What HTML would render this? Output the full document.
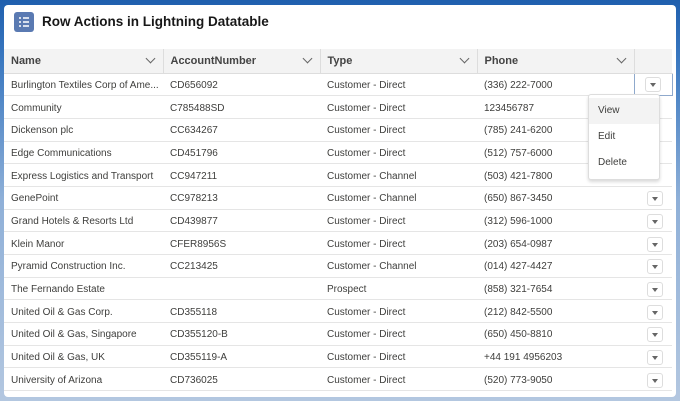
<!DOCTYPE html>
<html><head><meta charset="utf-8"><style>
*{box-sizing:border-box;margin:0;padding:0}
body{width:680px;height:401px;overflow:hidden;background:linear-gradient(#1f5fae 0px,#3a78c0 60px,#8fb0d8 200px,#b3c7e0 401px);font-family:"Liberation Sans",sans-serif;position:relative}
.card{position:absolute;left:4px;top:5px;width:672px;height:392px;background:#fff;border-radius:4px;overflow:hidden}
.icon{position:absolute;left:10px;top:7px;width:20px;height:20px;background:#5a7ab2;border-radius:3px}
.title{position:absolute;left:38px;top:9px;font-size:13.5px;font-weight:bold;color:#181818}
table{position:absolute;left:0;top:44px;border-collapse:collapse;table-layout:fixed;width:668px}
th{height:24px;background:#f3f3f3;text-align:left;font-size:11px;color:#444;font-weight:bold;padding-left:7px;border-right:1px solid #ddd;border-bottom:1px solid #ddd;position:relative}
th .c{position:absolute;right:9px;top:6px;width:7px;height:7px;border-right:1.2px solid #666;border-bottom:1.2px solid #666;transform:rotate(45deg)}
td{height:22.7px;font-size:10px;color:#3e3e3c;padding-left:7px;padding-top:2px;border-bottom:1px solid #e5e5e5;white-space:nowrap;overflow:hidden}
.b{display:inline-block;width:16px;height:15px;border:1px solid #ddd;border-radius:3px;position:relative;margin-left:6px;vertical-align:middle}
.b:after{content:"";position:absolute;left:4px;top:5px;border-left:3.5px solid transparent;border-right:3.5px solid transparent;border-top:4px solid #666}
.menu{position:absolute;left:584px;top:89px;width:72px;height:86px;background:#fff;border:1px solid #ddd;border-radius:3px;box-shadow:0 2px 3px rgba(0,0,0,.15);font-size:10px;color:#3e3e3c}
.menu div{height:26px;line-height:26px;padding-left:9px}
</style></head><body>
<div class="card">
<div class="icon"><svg width="20" height="20"><g stroke="#fff" stroke-width="1.5"><line x1="9" y1="6" x2="15" y2="6"/><line x1="9" y1="10" x2="15" y2="10"/><line x1="9" y1="14" x2="15" y2="14"/><line x1="5" y1="10" x2="7" y2="10"/></g><circle cx="6" cy="6" r="1" fill="#fff"/><circle cx="6" cy="14" r="1" fill="#fff"/></svg></div>
<div class="title">Row Actions in Lightning Datatable</div>
<table>
<colgroup><col style="width:159px"><col style="width:157px"><col style="width:157px"><col style="width:157px"><col style="width:38px"></colgroup>
<tr><th>Name<span class="c"></span></th><th>AccountNumber<span class="c"></span></th><th>Type<span class="c"></span></th><th>Phone<span class="c"></span></th><th style="border-right:none"></th></tr>
<tr><td>Burlington Textiles Corp of Ame...</td><td>CD656092</td><td>Customer - Direct</td><td>(336) 222-7000</td><td style="border:1px solid #8fa9cc;padding-left:0;padding-top:0"><span class="b" style="margin-left:10px"></span></td></tr>
<tr><td>Community</td><td>C785488SD</td><td>Customer - Direct</td><td>123456787</td><td></td></tr>
<tr><td>Dickenson plc</td><td>CC634267</td><td>Customer - Direct</td><td>(785) 241-6200</td><td></td></tr>
<tr><td>Edge Communications</td><td>CD451796</td><td>Customer - Direct</td><td>(512) 757-6000</td><td></td></tr>
<tr><td>Express Logistics and Transport</td><td>CC947211</td><td>Customer - Channel</td><td>(503) 421-7800</td><td></td></tr>
<tr><td>GenePoint</td><td>CC978213</td><td>Customer - Channel</td><td>(650) 867-3450</td><td><span class="b"></span></td></tr>
<tr><td>Grand Hotels &amp; Resorts Ltd</td><td>CD439877</td><td>Customer - Direct</td><td>(312) 596-1000</td><td><span class="b"></span></td></tr>
<tr><td>Klein Manor</td><td>CFER8956S</td><td>Customer - Direct</td><td>(203) 654-0987</td><td><span class="b"></span></td></tr>
<tr><td>Pyramid Construction Inc.</td><td>CC213425</td><td>Customer - Channel</td><td>(014) 427-4427</td><td><span class="b"></span></td></tr>
<tr><td>The Fernando Estate</td><td></td><td>Prospect</td><td>(858) 321-7654</td><td><span class="b"></span></td></tr>
<tr><td>United Oil &amp; Gas Corp.</td><td>CD355118</td><td>Customer - Direct</td><td>(212) 842-5500</td><td><span class="b"></span></td></tr>
<tr><td>United Oil &amp; Gas, Singapore</td><td>CD355120-B</td><td>Customer - Direct</td><td>(650) 450-8810</td><td><span class="b"></span></td></tr>
<tr><td>United Oil &amp; Gas, UK</td><td>CD355119-A</td><td>Customer - Direct</td><td>+44 191 4956203</td><td><span class="b"></span></td></tr>
<tr><td>University of Arizona</td><td>CD736025</td><td>Customer - Direct</td><td>(520) 773-9050</td><td><span class="b"></span></td></tr>
</table>
<div class="menu"><div style="background:#f3f3f3;margin-top:3px">View</div><div>Edit</div><div>Delete</div></div>
</div>
</body></html>
